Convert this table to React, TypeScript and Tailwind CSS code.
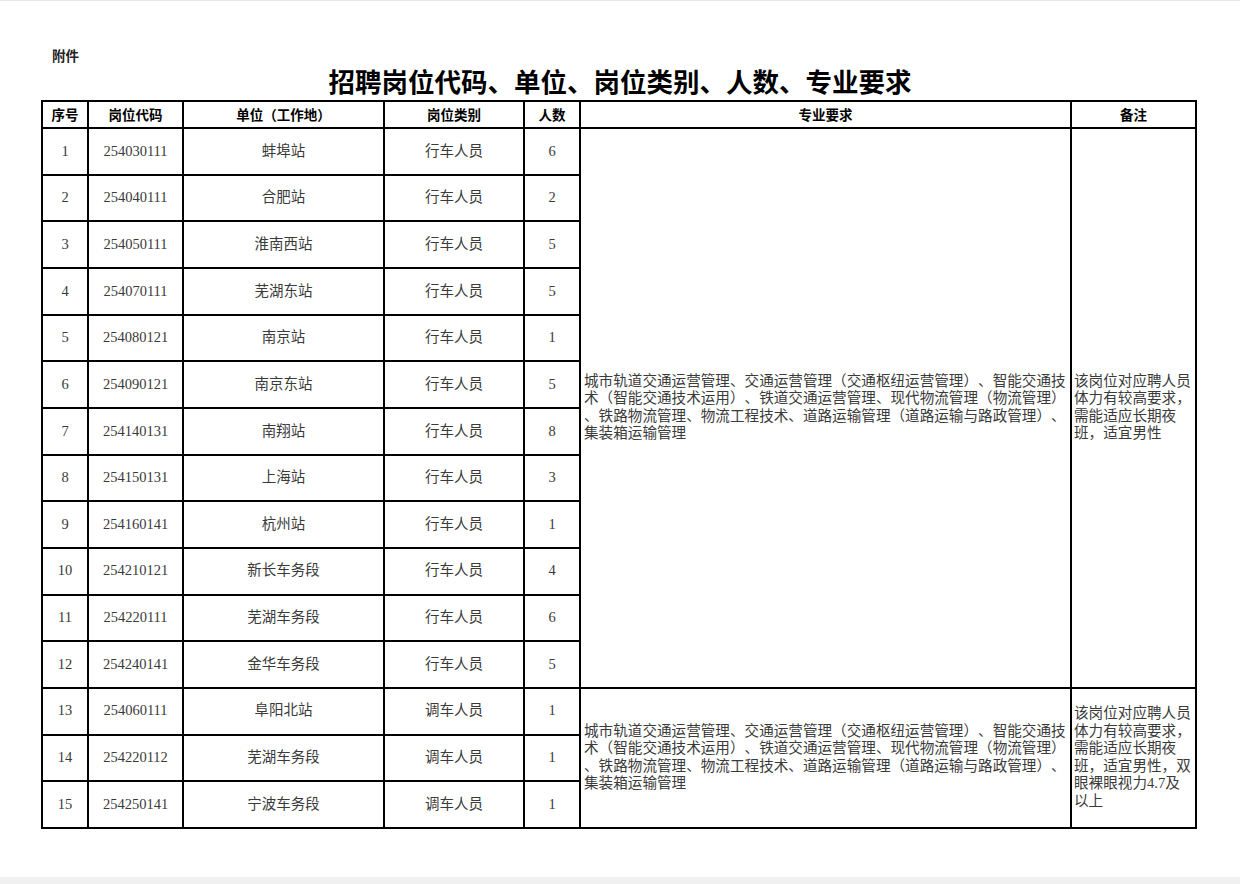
import React from 'react';

const rows: Array<{ no: number; code: string; unit: string; kind: string; count: number }> = [
  { no: 1, code: '254030111', unit: '蚌埠站', kind: '行车人员', count: 6 },
  { no: 2, code: '254040111', unit: '合肥站', kind: '行车人员', count: 2 },
  { no: 3, code: '254050111', unit: '淮南西站', kind: '行车人员', count: 5 },
  { no: 4, code: '254070111', unit: '芜湖东站', kind: '行车人员', count: 5 },
  { no: 5, code: '254080121', unit: '南京站', kind: '行车人员', count: 1 },
  { no: 6, code: '254090121', unit: '南京东站', kind: '行车人员', count: 5 },
  { no: 7, code: '254140131', unit: '南翔站', kind: '行车人员', count: 8 },
  { no: 8, code: '254150131', unit: '上海站', kind: '行车人员', count: 3 },
  { no: 9, code: '254160141', unit: '杭州站', kind: '行车人员', count: 1 },
  { no: 10, code: '254210121', unit: '新长车务段', kind: '行车人员', count: 4 },
  { no: 11, code: '254220111', unit: '芜湖车务段', kind: '行车人员', count: 6 },
  { no: 12, code: '254240141', unit: '金华车务段', kind: '行车人员', count: 5 },
  { no: 13, code: '254060111', unit: '阜阳北站', kind: '调车人员', count: 1 },
  { no: 14, code: '254220112', unit: '芜湖车务段', kind: '调车人员', count: 1 },
  { no: 15, code: '254250141', unit: '宁波车务段', kind: '调车人员', count: 1 },
];

// 专业要求 is identical for both groups, wrapped like the source sheet
const majorLines = [
  '城市轨道交通运营管理、交通运营管理（交通枢纽运营管理）、智能交通技',
  '术（智能交通技术运用）、铁道交通运营管理、现代物流管理（物流管理）',
  '、铁路物流管理、物流工程技术、道路运输管理（道路运输与路政管理）、',
  '集装箱运输管理',
];

const noteA = ['该岗位对应聘人员', '体力有较高要求，', '需能适应长期夜', '班，适宜男性'];
const noteB = ['该岗位对应聘人员', '体力有较高要求，', '需能适应长期夜', '班，适宜男性，双', '眼裸眼视力4.7及', '以上'];

function Lines({ lines }: { lines: string[] }) {
  return (
    <>
      {lines.map((l, i) => (
        <span key={i} className="block whitespace-nowrap">
          {l}
        </span>
      ))}
    </>
  );
}

const th = 'border-2 border-black p-0 text-center align-middle font-bold text-[13.5px] text-black';
const td = 'border-2 border-black p-0 text-center align-middle';
const merged = 'border-2 border-black pr-0 text-left align-middle text-[14.6px]';

function App() {
  return (
    <div className="w-[1240px] h-[884px] bg-[#f0f0f0] overflow-hidden">
      <div className="h-[877px] bg-white border-t border-[#e6e6e6] font-['Liberation_Serif','Noto_Sans_CJK_SC',serif] text-[#3a3a3a] [text-spacing-trim:space-all]">
        <div className="pt-[45px] pl-[52px] h-[64px] text-[13.5px] leading-[18px] font-semibold text-[#222] font-['Noto_Sans_CJK_SC',sans-serif]">
          附件
        </div>
        <h1 className="h-[35px] text-center text-[26.5px] leading-[32px] font-bold text-black font-['Noto_Sans_CJK_SC',sans-serif]">
          招聘岗位代码、单位、岗位类别、人数、专业要求
        </h1>

        <table className="ml-[41px] w-[1154px] table-fixed border-collapse border-2 border-black text-[14.5px] leading-[17.5px]">
          <colgroup>
            <col className="w-[46px]" />
            <col className="w-[95px]" />
            <col className="w-[201px]" />
            <col className="w-[140px]" />
            <col className="w-[56px]" />
            <col className="w-[491px]" />
            <col className="w-[125px]" />
          </colgroup>
          <thead>
            <tr className="h-[27px] font-['Noto_Sans_CJK_SC',sans-serif]">
              <th className={th}>序号</th>
              <th className={th}>岗位代码</th>
              <th className={th}>单位（工作地）</th>
              <th className={th}>岗位类别</th>
              <th className={th}>人数</th>
              <th className={th}>专业要求</th>
              <th className={th}>备注</th>
            </tr>
          </thead>
          <tbody>
            {rows.map((r) => (
              <tr key={r.no} className="h-[46.67px]">
                <td className={td}>{r.no}</td>
                <td className={td}>{r.code}</td>
                <td className={td}>{r.unit}</td>
                <td className={td}>{r.kind}</td>
                <td className={td}>{r.count}</td>
                {r.no === 1 && (
                  <>
                    <td rowSpan={12} className={`${merged} pl-[3px]`}>
                      <Lines lines={majorLines} />
                    </td>
                    <td rowSpan={12} className={`${merged} pl-[2px]`}>
                      <Lines lines={noteA} />
                    </td>
                  </>
                )}
                {r.no === 13 && (
                  <>
                    <td rowSpan={3} className={`${merged} pl-[3px]`}>
                      <Lines lines={majorLines} />
                    </td>
                    <td rowSpan={3} className={`${merged} pl-[2px]`}>
                      <Lines lines={noteB} />
                    </td>
                  </>
                )}
              </tr>
            ))}
          </tbody>
        </table>
      </div>
    </div>
  );
}

export default App;
